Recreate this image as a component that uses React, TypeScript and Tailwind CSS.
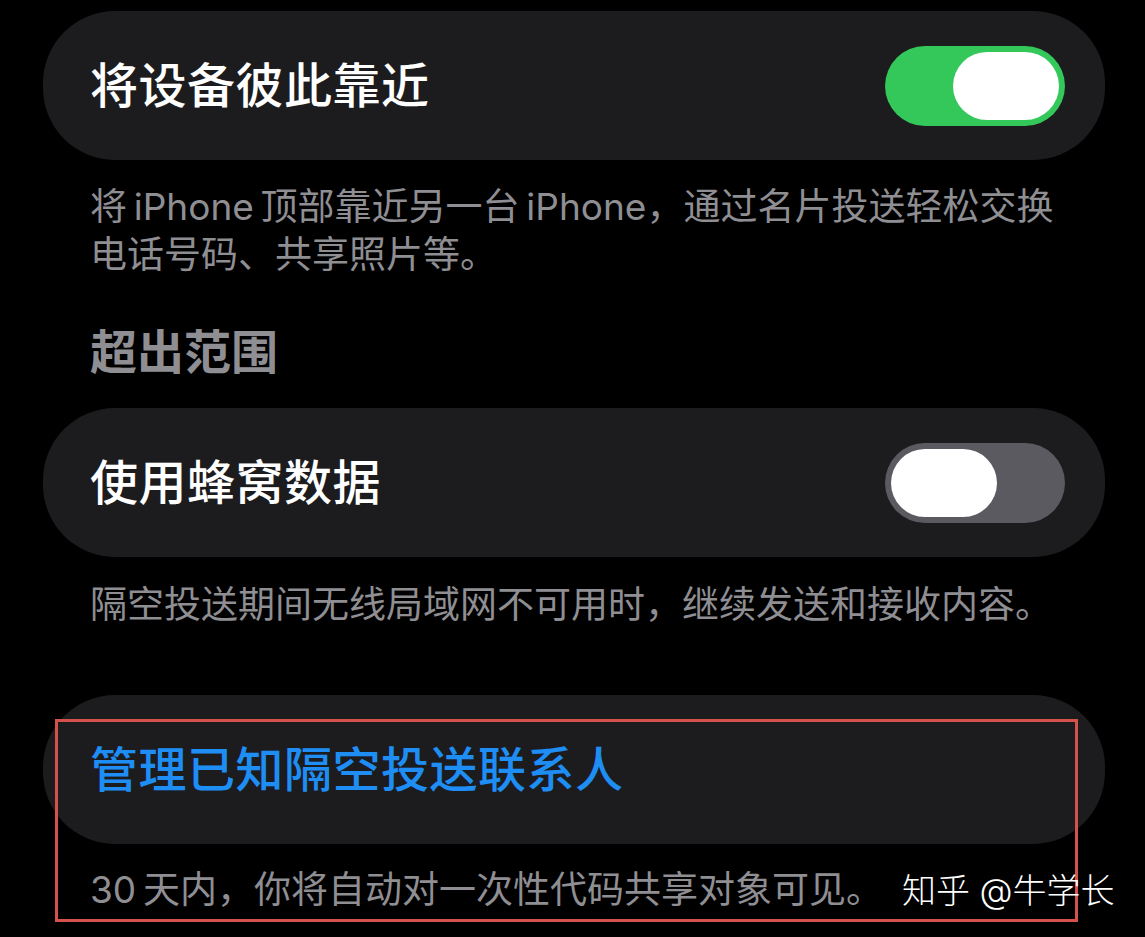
import React from 'react';

const FONT = { fontFamily: '"Inter", "Noto Sans CJK SC", sans-serif' };

const Toggle = ({ on }: { on: boolean }) => (
  <div className={`w-[180px] h-[80px] rounded-full p-[6px] flex ${on ? 'bg-[#34c759] justify-end' : 'bg-[#5b5a60] justify-start'}`}>
    <div className="w-[106px] h-[68px] rounded-full bg-white" />
  </div>
);

const Row = ({ children }: { children: React.ReactNode }) => (
  <div className="h-[149px] rounded-[72px] bg-[#1c1c1e] pl-[47px] pr-[40px] flex items-center justify-between">{children}</div>
);

export default function App() {
  return (
    <div className="w-[1145px] h-[937px] bg-black overflow-hidden px-[40px] pt-[11px] relative" style={FONT}>
      <div className="pl-[3px]">
        <Row>
          <span className="text-[48px] font-medium text-white leading-none tracking-[0.5px]">将设备彼此靠近</span>
          <Toggle on />
        </Row>

        <p className="mt-[23px] pl-[47px] text-[37px] leading-[48px] text-[#8e8e93]">
          将{'\u2009'}iPhone{'\u2009'}顶部靠近另一台{'\u2009'}iPhone，通过名片投送轻松交换
          <br />
          电话号码、共享照片等。
        </p>

        <h2 className="mt-[49px] pl-[47px] text-[47px] font-bold leading-[48px] text-[#8e8e93]">超出范围</h2>

        <div className="mt-[32px]">
          <Row>
            <span className="text-[48px] font-medium text-white leading-none tracking-[0.5px]">使用蜂窝数据</span>
            <Toggle on={false} />
          </Row>
        </div>

        <p className="mt-[24px] pl-[47px] text-[37px] leading-[48px] text-[#8e8e93]">
          隔空投送期间无线局域网不可用时，继续发送和接收内容。
        </p>

        <div className="mt-[66px] relative">
          <Row>
            <span className="text-[48px] font-medium text-[#1e8ef5] leading-none tracking-[0.5px]">管理已知隔空投送联系人</span>
          </Row>
          <p className="mt-[22px] pl-[47px] text-[37px] leading-[48px] text-[#8e8e93]">
            30{'\u2009'}天内，你将自动对一次性代码共享对象可见。
          </p>

          {/* annotation frame drawn over the screenshot */}
          <div className="absolute left-[12px] top-[24px] w-[1023px] h-[203px] border-[3px] border-[#d5524c] pointer-events-none" />
          <div className="absolute left-[859px] top-[176px] text-[34px] leading-[40px] text-white font-light whitespace-nowrap">知乎 @牛学长</div>
        </div>
      </div>
    </div>
  );
}
